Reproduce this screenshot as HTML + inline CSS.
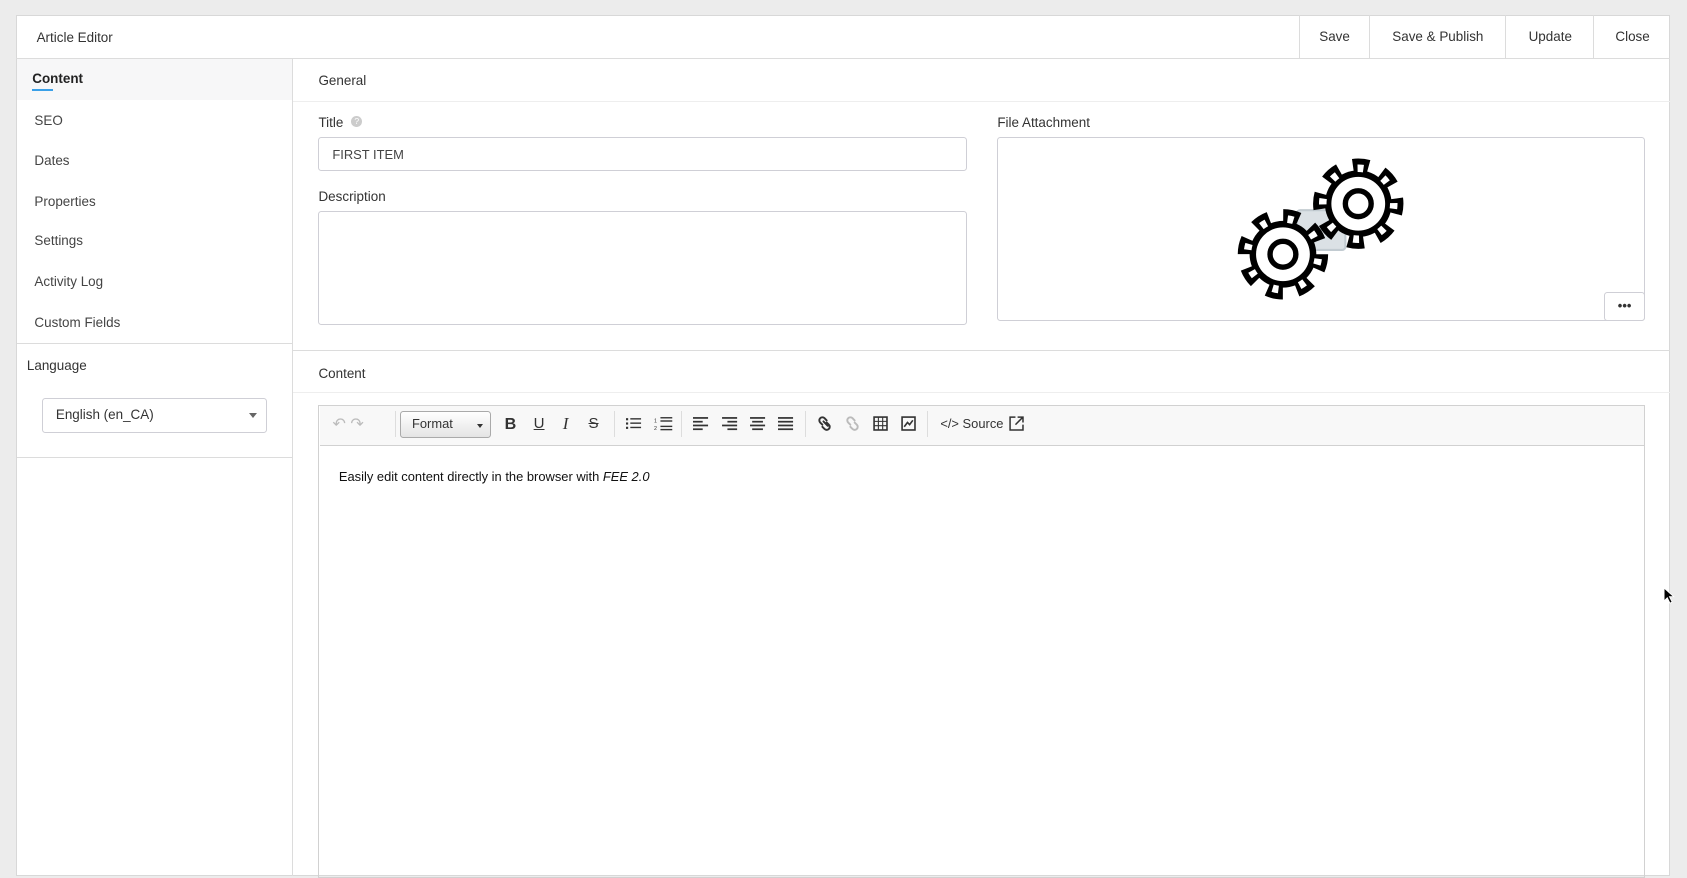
<!DOCTYPE html>
<html><head><style>
html,body{margin:0;padding:0}
body{zoom:1.07589;width:1568px;height:781px;background:#ececec;font-family:"Liberation Sans",sans-serif;color:#333;position:relative;overflow:hidden}
.a{position:absolute}
.panel{left:15px;top:14px;width:1537px;height:800px;background:#fff;border:1px solid #d8d8d8;box-sizing:border-box}
.hdr{left:15px;top:14px;width:1537px;height:41px;border-bottom:1px solid #dcdcdc;box-sizing:border-box}
.btn{top:14px;height:40px;border-left:1px solid #dcdcdc;font-size:12.5px;line-height:40px;text-align:center;color:#333}
.side{left:15px;top:54px;width:257px;height:760px;border-right:1px solid #dcdcdc;box-sizing:border-box}
.nav{left:32px;font-size:12.5px;color:#444}
.lbl{font-size:12.5px;color:#333}
.in{border:1px solid #cfcfd6;border-radius:3px;box-sizing:border-box;background:#fff}
.sep{top:382px;width:1px;height:24px;background:#ddd}
</style></head><body>
<div class="a panel"></div>
<div class="a hdr"></div>
<div class="a" style="left:34px;top:28px;font-size:12.5px;color:#333">Article Editor</div>
<div class="a btn" style="left:1207px;width:65px">Save</div>
<div class="a btn" style="left:1272px;width:127px">Save &amp; Publish</div>
<div class="a btn" style="left:1399px;width:82px">Update</div>
<div class="a btn" style="left:1481px;width:71px">Close</div>

<div class="a side"></div>
<div class="a" style="left:16px;top:55px;width:255px;height:38px;background:#f7f7f8"></div>
<div class="a nav" style="left:30px;top:66px;color:#222;font-weight:bold">Content</div>
<div class="a" style="left:30px;top:83px;width:19px;height:2px;background:#3aa0e8"></div>
<div class="a nav" style="top:105px">SEO</div>
<div class="a nav" style="top:142px">Dates</div>
<div class="a nav" style="top:180px">Properties</div>
<div class="a nav" style="top:217px">Settings</div>
<div class="a nav" style="top:255px">Activity Log</div>
<div class="a nav" style="top:293px">Custom Fields</div>
<div class="a" style="left:16px;top:319px;width:255px;height:1px;background:#dcdcdc"></div>
<div class="a lbl" style="left:25px;top:333px">Language</div>
<div class="a in" style="left:39px;top:370px;width:209px;height:32px;font-size:12.5px;line-height:30px;padding-left:12px;color:#333">English (en_CA)<span class="a" style="right:8px;top:13px;border:4px solid transparent;border-top:5px solid #666"></span></div>
<div class="a" style="left:16px;top:425px;width:255px;height:1px;background:#dcdcdc"></div>

<div class="a lbl" style="left:296px;top:68px">General</div>
<div class="a" style="left:272px;top:94px;width:1280px;height:1px;background:#eee"></div>
<div class="a lbl" style="left:296px;top:107px">Title <span style="display:inline-block;width:10px;height:10px;border-radius:50%;background:#ccc;color:#fff;font-size:8px;line-height:10px;text-align:center;vertical-align:3px;margin-left:4px">?</span></div>
<div class="a in" style="left:296px;top:127px;width:603px;height:32px;font-size:12px;line-height:31px;padding-left:12px;color:#444">FIRST ITEM</div>
<div class="a lbl" style="left:296px;top:176px">Description</div>
<div class="a in" style="left:296px;top:196px;width:603px;height:106px"></div>
<div class="a lbl" style="left:927px;top:107px">File Attachment</div>
<div class="a in" style="left:927px;top:127px;width:602px;height:171px"></div>
<div class="a in" style="left:1491px;top:271px;width:38px;height:27px;text-align:center;font-size:12px;line-height:24px;font-weight:bold;color:#333">•••</div>
<svg class="a" style="left:1140px;top:140px" width="180" height="150" viewBox="1140 140 180 150">
<rect x="1205" y="195" width="45" height="37" rx="3" fill="#dbe1e5" stroke="#c2cbd1" stroke-width="2"/>
<g>
<circle cx="1192" cy="236" r="34" fill="none" stroke="#000" stroke-width="16" stroke-dasharray="14 12.7"/>
<circle cx="1192" cy="236" r="31" fill="#000"/>
<circle cx="1192" cy="236" r="33" fill="none" stroke="#fff" stroke-width="7" stroke-dasharray="5.5 20.4" stroke-dashoffset="-4.2"/>
<circle cx="1192" cy="236" r="25" fill="#fff"/>
<circle cx="1192" cy="236" r="12" fill="none" stroke="#000" stroke-width="5"/>
</g>
<circle cx="1262" cy="189" r="34" fill="none" stroke="#000" stroke-width="16" stroke-dasharray="14 12.7" stroke-dashoffset="5"/>
<circle cx="1262" cy="189" r="31" fill="#000"/>
<circle cx="1262" cy="189" r="33" fill="none" stroke="#fff" stroke-width="7" stroke-dasharray="5.5 20.4" stroke-dashoffset="0.8"/>
<circle cx="1262" cy="189" r="25" fill="#fff"/>
<circle cx="1262" cy="189" r="12" fill="none" stroke="#000" stroke-width="5"/>
</svg>

<div class="a" style="left:272px;top:325px;width:1280px;height:1px;background:#dcdcdc"></div>
<div class="a lbl" style="left:296px;top:340px">Content</div>
<div class="a" style="left:272px;top:364px;width:1280px;height:1px;background:#eee"></div>
<div class="a" style="left:296px;top:376px;width:1233px;height:440px;border:1px solid #d1d1d1;box-sizing:border-box"></div>
<div class="a" style="left:297px;top:377px;width:1231px;height:37px;background:#f8f8f8;border-bottom:1px solid #d1d1d1"></div>
<div class="a" style="left:309px;top:385px;color:#bbb;font-size:15px">↶ ↷</div>
<div class="a sep" style="left:367px"></div>
<div class="a" style="left:372px;top:382px;width:84px;height:25px;border:1px solid #aaa;border-radius:3px;box-sizing:border-box;background:linear-gradient(#fff,#e4e4e4);font-size:12px;line-height:23px;padding-left:10px;color:#333">Format<span class="a" style="right:6px;top:11px;border:3px solid transparent;border-top:4px solid #333"></span></div>
<div class="a" style="left:469px;top:386px;font-size:15px;color:#333;font-weight:bold">B</div>
<div class="a" style="left:496px;top:386px;font-size:14px;color:#333;text-decoration:underline">U</div>
<div class="a" style="left:523px;top:385px;font-size:16px;color:#333;font-style:italic;font-family:'Liberation Serif',serif">I</div>
<div class="a" style="left:547px;top:386px;font-size:14px;color:#333;text-decoration:line-through">S</div>
<div class="a sep" style="left:571px"></div>
<svg class="a" style="left:582px;top:387px" width="64" height="14">
<g fill="#333"><rect x="0" y="2" width="2" height="2"/><rect x="0" y="6" width="2" height="2"/><rect x="0" y="10" width="2" height="2"/><rect x="4" y="2" width="10" height="1.3"/><rect x="4" y="6" width="10" height="1.3"/><rect x="4" y="10" width="10" height="1.3"/>
<rect x="32" y="1" width="11" height="1.3"/><rect x="32" y="4" width="11" height="1.3"/><rect x="32" y="9" width="11" height="1.3"/><rect x="32" y="12" width="11" height="1.3"/></g>
<text x="26" y="6" font-size="5" fill="#333">1</text><text x="26" y="13" font-size="5" fill="#333">2</text></svg>
<div class="a sep" style="left:633px"></div>
<svg class="a" style="left:644px;top:387px" width="95" height="14"><g fill="#333">
<rect x="0" y="1" width="14" height="1.6"/><rect x="0" y="4.5" width="9" height="1.6"/><rect x="0" y="8" width="14" height="1.6"/><rect x="0" y="11.5" width="9" height="1.6"/>
<rect x="27" y="1" width="14" height="1.6"/><rect x="32" y="4.5" width="9" height="1.6"/><rect x="27" y="8" width="14" height="1.6"/><rect x="32" y="11.5" width="9" height="1.6"/>
<rect x="53" y="1" width="14" height="1.6"/><rect x="55" y="4.5" width="10" height="1.6"/><rect x="53" y="8" width="14" height="1.6"/><rect x="55" y="11.5" width="10" height="1.6"/>
<rect x="79" y="1" width="14" height="1.6"/><rect x="79" y="4.5" width="14" height="1.6"/><rect x="79" y="8" width="14" height="1.6"/><rect x="79" y="11.5" width="14" height="1.6"/></g></svg>
<div class="a sep" style="left:748px"></div>
<svg class="a" style="left:759px;top:386px" width="40" height="16"><g fill="none" stroke-width="1.8" stroke-linecap="round"><path d="M5 9L3 7A2.5 2.5 0 0 1 7 3L9 5M9 7L11 9A2.5 2.5 0 0 1 7 13L5 11M6 6L10 10" stroke="#333"/><path d="M31 9L29 7A2.5 2.5 0 0 1 33 3L35 5M35 7L37 9A2.5 2.5 0 0 1 33 13L31 11" stroke="#bbb"/></g></svg>
<svg class="a" style="left:811px;top:387px" width="14" height="14"><rect x="1" y="1" width="12" height="12" fill="none" stroke="#333" stroke-width="1.5"/><path d="M1 5H13M1 9H13M5 1V13M9 1V13" stroke="#333"/></svg>
<svg class="a" style="left:837px;top:387px" width="14" height="14"><rect x="1" y="1" width="12" height="12" fill="none" stroke="#333" stroke-width="1.5"/><path d="M3 10L6 6L8 8L11 4" stroke="#333" fill="none" stroke-width="1.5"/></svg>
<div class="a sep" style="left:862px"></div>
<div class="a" style="left:874px;top:387px;font-size:12px;color:#333">&lt;/&gt; Source</div>
<svg class="a" style="left:938px;top:387px" width="14" height="14"><path d="M6 1H1V13H13V8M8 1H13V6M13 1L6 8" stroke="#333" fill="none" stroke-width="1.4"/></svg>
<div class="a" style="left:315px;top:436px;font-size:12px;color:#111">Easily edit content directly in the browser with <i>FEE 2.0</i></div>
<svg class="a" style="left:1546px;top:546px" width="12" height="16"><path d="M1 1V13L4 10L6.5 15L8.5 14L6 9H10Z" fill="#000" stroke="#fff" stroke-width="0.8"/></svg>
</body></html>
